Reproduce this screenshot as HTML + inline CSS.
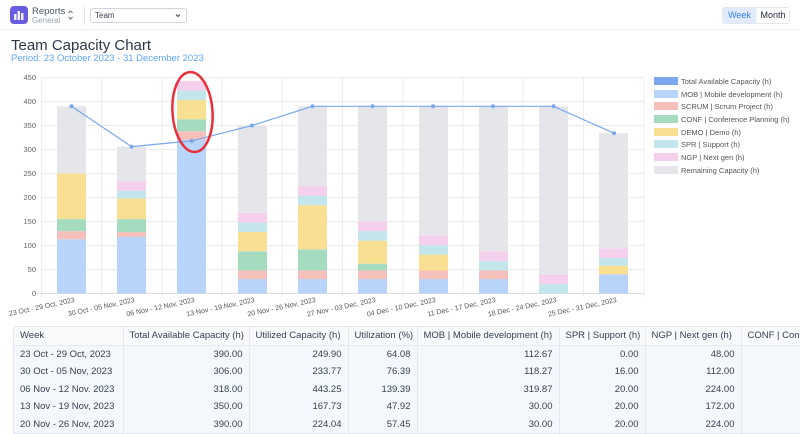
<!DOCTYPE html>
<html><head><meta charset="utf-8"><style>
*{margin:0;padding:0;box-sizing:border-box}
body{width:800px;height:431px;overflow:hidden;background:#fff;font-family:"Liberation Sans",sans-serif;position:relative;color:#2d3748}
.abs{position:absolute}
table{border-collapse:collapse;font-size:9.5px;color:#374151;table-layout:fixed;width:900px}
td,th{height:17.7px;padding:0 6px;border-right:1px solid #e5e9ef;white-space:nowrap;font-weight:normal;overflow:hidden}
th{text-align:left;height:18px;background:#f7f9fb;border-bottom:1px solid #e5e9ef}
td{text-align:right;background:#f4f8fd}
td:first-child{text-align:left}
</style></head><body>
<div class="abs" style="left:0;top:0;width:800px;height:30px;border-bottom:1px solid #eef0f3"></div>
<div class="abs" style="left:10px;top:6px;width:18px;height:18px;border-radius:4px;background:#6a5ce0">
<svg width="18" height="18"><rect x="4" y="8" width="2.5" height="6" fill="#fff" opacity=".9"/><rect x="7.5" y="5" width="2.5" height="9" fill="#fff" opacity=".9"/><rect x="11" y="7" width="2.5" height="7" fill="#fff" opacity=".9"/></svg></div>
<div class="abs" style="left:32px;top:6px;font-size:9.5px;color:#4b5563">Reports</div>
<div class="abs" style="left:32px;top:16px;font-size:8px;color:#9ca3af">General</div>
<svg class="abs" style="left:67px;top:9px" width="7" height="12"><path d="M1.5 4 L3.5 2 L5.5 4 M1.5 8 L3.5 10 L5.5 8" fill="none" stroke="#6b7280" stroke-width="1"/></svg>
<div class="abs" style="left:84px;top:5px;width:1px;height:20px;background:#e5e7eb"></div>
<div class="abs" style="left:90px;top:8px;width:97px;height:15px;border:1px solid #d1d5db;border-radius:3px;font-size:8px;padding:2px 4px;color:#374151">Team<svg style="position:absolute;right:5px;top:4px" width="6" height="5"><path d="M1 1.5 L3 3.5 L5 1.5" fill="none" stroke="#374151" stroke-width="1"/></svg></div>
<div class="abs" style="left:722px;top:7px;width:68px;height:17px;border-radius:3px;background:#f3f4f6;border:1px solid #e5e7eb"></div>
<div class="abs" style="left:723px;top:8px;width:33px;height:15px;background:#e0ecfb;border-radius:2px;font-size:9px;color:#3b82f6;text-align:center;line-height:15px">Week</div>
<div class="abs" style="left:757px;top:8px;width:32px;height:15px;background:#fff;font-size:9px;color:#1f2937;text-align:center;line-height:15px">Month</div>
<div class="abs" style="left:11px;top:37px;font-size:15px;color:#2d3748">Team Capacity Chart</div>
<div class="abs" style="left:11px;top:53px;font-size:9.5px;color:#60a5fa">Period: 23 October 2023 - 31 December 2023</div>

<svg class="abs" style="left:0;top:0" width="800" height="325">
<g stroke="#ececec" stroke-width="1">
<line x1="41" y1="77.5" x2="644" y2="77.5"/><line x1="41" y1="101.5" x2="644" y2="101.5"/><line x1="41" y1="125.5" x2="644" y2="125.5"/><line x1="41" y1="149.5" x2="644" y2="149.5"/><line x1="41" y1="173.5" x2="644" y2="173.5"/><line x1="41" y1="197.5" x2="644" y2="197.5"/><line x1="41" y1="221.5" x2="644" y2="221.5"/><line x1="41" y1="245.5" x2="644" y2="245.5"/><line x1="41" y1="269.5" x2="644" y2="269.5"/><line x1="37" y1="293.5" x2="644" y2="293.5" stroke="#ddd"/>
<line x1="41.5" y1="77" x2="41.5" y2="297"/><line x1="101.5" y1="77" x2="101.5" y2="297"/><line x1="162" y1="77" x2="162" y2="297"/><line x1="222" y1="77" x2="222" y2="297"/><line x1="282" y1="77" x2="282" y2="297"/><line x1="342.5" y1="77" x2="342.5" y2="297"/><line x1="403" y1="77" x2="403" y2="297"/><line x1="463" y1="77" x2="463" y2="297"/><line x1="523" y1="77" x2="523" y2="297"/><line x1="583.5" y1="77" x2="583.5" y2="297"/><line x1="644" y1="77" x2="644" y2="297"/>
</g>
<g font-size="7.5" fill="#666" text-anchor="end">
<text x="36" y="80">450</text><text x="36" y="104">400</text><text x="36" y="128">350</text><text x="36" y="152">300</text><text x="36" y="176">250</text><text x="36" y="200">200</text><text x="36" y="224">150</text><text x="36" y="248">100</text><text x="36" y="272">50</text><text x="36" y="296">0</text>
</g>
<g transform="translate(0,293.5) scale(1,-0.48)">
<g transform="translate(57,0)"><rect width="29" y="0" height="113" fill="#b8d4fa"/><rect width="29" y="113" height="17" fill="#f5c0bc"/><rect width="29" y="130" height="25" fill="#a5dcc0"/><rect width="29" y="155" height="95" fill="#f9df92"/><rect width="29" y="250" height="140" fill="#e5e6ea"/></g>
<g transform="translate(117,0)"><rect width="29" height="118" fill="#b8d4fa"/><rect width="29" y="118" height="10" fill="#f5c0bc"/><rect width="29" y="128" height="27" fill="#a5dcc0"/><rect width="29" y="155" height="43" fill="#f9df92"/><rect width="29" y="198" height="16" fill="#c3e6ec"/><rect width="29" y="214" height="20" fill="#f5d0ec"/><rect width="29" y="234" height="72" fill="#e5e6ea"/></g>
<g transform="translate(177,0)"><rect width="29" height="320" fill="#b8d4fa"/><rect width="29" y="320" height="18" fill="#f5c0bc"/><rect width="29" y="338" height="25" fill="#a5dcc0"/><rect width="29" y="363" height="40" fill="#f9df92"/><rect width="29" y="403" height="20" fill="#c3e6ec"/><rect width="29" y="423" height="20" fill="#f5d0ec"/></g>
<g transform="translate(238,0)"><rect width="29" height="30" fill="#b8d4fa"/><rect width="29" y="30" height="18" fill="#f5c0bc"/><rect width="29" y="48" height="40" fill="#a5dcc0"/><rect width="29" y="88" height="40" fill="#f9df92"/><rect width="29" y="128" height="20" fill="#c3e6ec"/><rect width="29" y="148" height="20" fill="#f5d0ec"/><rect width="29" y="168" height="182" fill="#e5e6ea"/></g>
<g transform="translate(298,0)"><rect width="29" height="30" fill="#b8d4fa"/><rect width="29" y="30" height="18" fill="#f5c0bc"/><rect width="29" y="48" height="44" fill="#a5dcc0"/><rect width="29" y="92" height="92" fill="#f9df92"/><rect width="29" y="184" height="20" fill="#c3e6ec"/><rect width="29" y="204" height="20" fill="#f5d0ec"/><rect width="29" y="224" height="166" fill="#e5e6ea"/></g>
<g transform="translate(358,0)"><rect width="29" height="30" fill="#b8d4fa"/><rect width="29" y="30" height="18" fill="#f5c0bc"/><rect width="29" y="48" height="14" fill="#a5dcc0"/><rect width="29" y="62" height="48" fill="#f9df92"/><rect width="29" y="110" height="20" fill="#c3e6ec"/><rect width="29" y="130" height="20" fill="#f5d0ec"/><rect width="29" y="150" height="240" fill="#e5e6ea"/></g>
<g transform="translate(419,0)"><rect width="29" height="30" fill="#b8d4fa"/><rect width="29" y="30" height="18" fill="#f5c0bc"/><rect width="29" y="48" height="33" fill="#f9df92"/><rect width="29" y="81" height="20" fill="#c3e6ec"/><rect width="29" y="101" height="20" fill="#f5d0ec"/><rect width="29" y="121" height="269" fill="#e5e6ea"/></g>
<g transform="translate(479,0)"><rect width="29" height="30" fill="#b8d4fa"/><rect width="29" y="30" height="18" fill="#f5c0bc"/><rect width="29" y="48" height="20" fill="#c3e6ec"/><rect width="29" y="68" height="20" fill="#f5d0ec"/><rect width="29" y="88" height="302" fill="#e5e6ea"/></g>
<g transform="translate(539,0)"><rect width="29" height="20" fill="#c3e6ec"/><rect width="29" y="20" height="20" fill="#f5d0ec"/><rect width="29" y="40" height="350" fill="#e5e6ea"/></g>
<g transform="translate(599,0)"><rect width="29" height="40" fill="#b8d4fa"/><rect width="29" y="40" height="18" fill="#f9df92"/><rect width="29" y="58" height="16" fill="#c3e6ec"/><rect width="29" y="74" height="20" fill="#f5d0ec"/><rect width="29" y="94" height="240" fill="#e5e6ea"/></g>
</g>
<polyline fill="none" stroke="#7aa7ee" stroke-width="1.2" points="71.5,106.3 131.5,146.6 191.7,140.9 252,125.5 312.4,106.3 372.6,106.3 433,106.3 493,106.3 553.6,106.3 614,133.2"/>
<g fill="#7aa7ee"><circle cx="71.5" cy="106.3" r="2"/><circle cx="131.5" cy="146.6" r="2"/><circle cx="191.7" cy="140.9" r="2"/><circle cx="252" cy="125.5" r="2"/><circle cx="312.4" cy="106.3" r="2"/><circle cx="372.6" cy="106.3" r="2"/><circle cx="433" cy="106.3" r="2"/><circle cx="493" cy="106.3" r="2"/><circle cx="553.6" cy="106.3" r="2"/><circle cx="614" cy="133.2" r="2"/></g>
<ellipse cx="192.5" cy="112" rx="20" ry="40" fill="none" stroke="#e8303a" stroke-width="2.5" transform="rotate(-4 192.5 112)"/>
<g font-size="7" fill="#555" text-anchor="end">
<text transform="translate(75,302) rotate(-12)">23 Oct - 29 Oct, 2023</text>
<text transform="translate(135,302) rotate(-12)">30 Oct - 05 Nov, 2023</text>
<text transform="translate(195,302) rotate(-12)">06 Nov - 12 Nov, 2023</text>
<text transform="translate(255,302) rotate(-12)">13 Nov - 19 Nov, 2023</text>
<text transform="translate(316,302) rotate(-12)">20 Nov - 26 Nov, 2023</text>
<text transform="translate(376,302) rotate(-12)">27 Nov - 03 Dec, 2023</text>
<text transform="translate(436,302) rotate(-12)">04 Dec - 10 Dec, 2023</text>
<text transform="translate(496,302) rotate(-12)">11 Dec - 17 Dec, 2023</text>
<text transform="translate(557,302) rotate(-12)">18 Dec - 24 Dec, 2023</text>
<text transform="translate(617,302) rotate(-12)">25 Dec - 31 Dec, 2023</text>
</g>
<g font-size="7.5" fill="#555">
<rect x="654" y="77" width="24" height="8" fill="#7aa7ee"/><text x="681" y="84">Total Available Capacity (h)</text>
<rect x="654" y="90" width="24" height="8" fill="#b8d4fa"/><text x="681" y="97">MOB | Mobile development (h)</text>
<rect x="654" y="102" width="24" height="8" fill="#f5c0bc"/><text x="681" y="109">SCRUM | Scrum Project (h)</text>
<rect x="654" y="115" width="24" height="8" fill="#a5dcc0"/><text x="681" y="122">CONF | Conference Planning (h)</text>
<rect x="654" y="128" width="24" height="8" fill="#f9df92"/><text x="681" y="135">DEMO | Demo (h)</text>
<rect x="654" y="140" width="24" height="8" fill="#c3e6ec"/><text x="681" y="147">SPR | Support (h)</text>
<rect x="654" y="153" width="24" height="8" fill="#f5d0ec"/><text x="681" y="160">NGP | Next gen (h)</text>
<rect x="654" y="166" width="24" height="8" fill="#e5e6ea"/><text x="681" y="173">Remaining Capacity (h)</text>
</g>
</svg>

<div class="abs" style="left:13px;top:326px;width:800px;border:1px solid #e5e9ef;border-radius:4px 0 0 0;overflow:hidden">
<table>
<colgroup><col style="width:109px"><col style="width:126px"><col style="width:99px"><col style="width:69px"><col style="width:142px"><col style="width:86px"><col style="width:96px"><col style="width:173px"></colgroup>
<tr><th>Week</th><th>Total Available Capacity (h)</th><th>Utilized Capacity (h)</th><th>Utilization (%)</th><th>MOB | Mobile development (h)</th><th>SPR | Support (h)</th><th>NGP | Next gen (h)</th><th>CONF | Conference Planning (h)</th></tr>
<tr><td>23 Oct - 29 Oct, 2023</td><td>390.00</td><td>249.90</td><td>64.08</td><td>112.67</td><td>0.00</td><td>48.00</td><td></td></tr>
<tr><td>30 Oct - 05 Nov, 2023</td><td>306.00</td><td>233.77</td><td>76.39</td><td>118.27</td><td>16.00</td><td>112.00</td><td></td></tr>
<tr><td>06 Nov - 12 Nov. 2023</td><td>318.00</td><td>443.25</td><td>139.39</td><td>319.87</td><td>20.00</td><td>224.00</td><td></td></tr>
<tr><td>13 Nov - 19 Nov, 2023</td><td>350.00</td><td>167.73</td><td>47.92</td><td>30.00</td><td>20.00</td><td>172.00</td><td></td></tr>
<tr><td>20 Nov - 26 Nov, 2023</td><td>390.00</td><td>224.04</td><td>57.45</td><td>30.00</td><td>20.00</td><td>224.00</td><td></td></tr>
</table></div>
</body></html>
